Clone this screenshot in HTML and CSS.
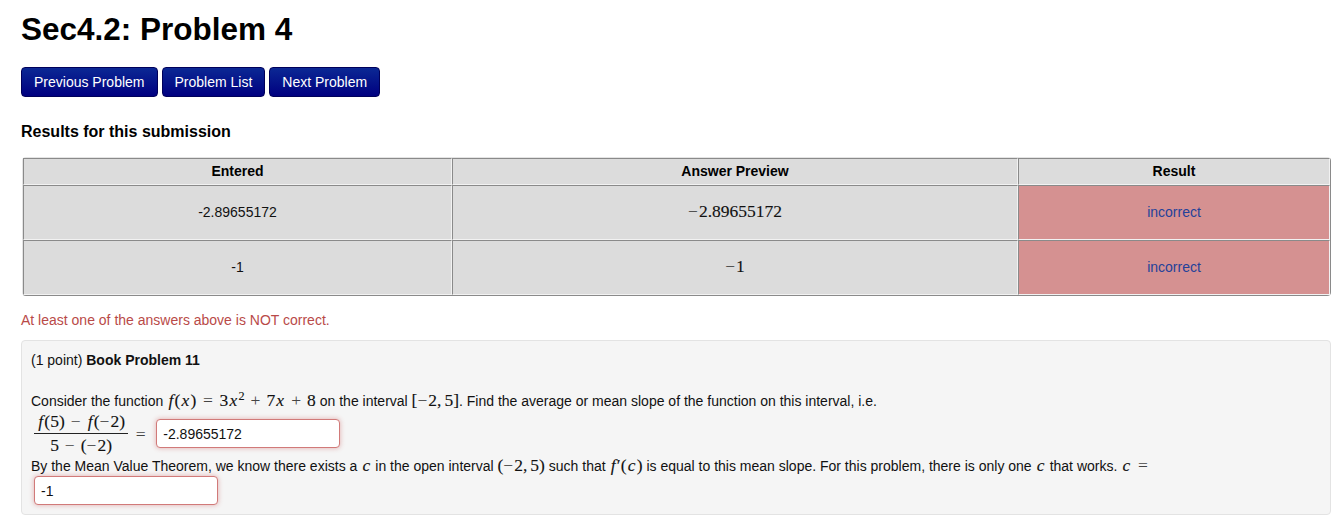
FILE: index.html
```html
<!DOCTYPE html>
<html lang="en">
<head>
<meta charset="utf-8">
<title>Sec4.2: Problem 4</title>
<link rel="stylesheet" href="styles.css">
</head>
<body>
<div class="page">
  <h1 class="title">Sec4.2: Problem 4</h1>
  <div class="nav">
    <a class="btn" href="#">Previous Problem</a>
    <a class="btn" href="#">Problem List</a>
    <a class="btn" href="#">Next Problem</a>
  </div>
  <h2 class="results-title">Results for this submission</h2>
  <table class="results">
    <thead>
      <tr>
        <th class="col-entered">Entered</th>
        <th class="col-preview">Answer Preview</th>
        <th class="col-result">Result</th>
      </tr>
    </thead>
    <tbody>
      <tr>
        <td>-2.89655172</td>
        <td><span class="math"><span class="mo-lead">−</span>2.89655172</span></td>
        <td class="incorrect">incorrect</td>
      </tr>
      <tr>
        <td>-1</td>
        <td><span class="math"><span class="mo-lead">−</span>1</span></td>
        <td class="incorrect">incorrect</td>
      </tr>
    </tbody>
  </table>
  <p class="error">At least one of the answers above is NOT correct.</p>
  <div class="well">
    <div class="problem-head">(1 point) <b>Book Problem 11</b></div>
    <div class="problem-body">
      Consider the function <span class="math"><i class="mi">f</i>(<i class="mi">x</i>)<span class="rel">=</span>3<i class="mi">x</i><sup>2</sup><span class="bin">+</span>7<i class="mi">x</i><span class="bin">+</span>8</span> on the interval <span class="math">[<span class="mo-lead">−</span>2,<span class="thin"></span>5]</span>. Find the average or mean slope of the function on this interval, i.e.<br>
      <span class="math frac-wrap"><span class="frac"><span class="num"><i class="mi">f</i>(5)<span class="bin">−</span><i class="mi">f</i>(<span class="mo-lead">−</span>2)</span><span class="den">5<span class="bin">−</span>(<span class="mo-lead">−</span>2)</span></span><span class="rel">=</span></span><input class="answer" type="text" value="-2.89655172"><br>
      By the Mean Value Theorem, we know there exists a <span class="math"><i class="mi">c</i></span> in the open interval <span class="math">(<span class="mo-lead">−</span>2,<span class="thin"></span>5)</span> such that <span class="math"><i class="mi">f</i>′(<i class="mi">c</i>)</span> is equal to this mean slope. For this problem, there is only one <span class="math"><i class="mi">c</i></span> that works. <span class="math"><i class="mi">c</i><span class="rel">=</span></span><br>
      <input class="answer answer-last" type="text" value="-1">
    </div>
  </div>
</div>
</body>
</html>
```

FILE: styles.css
```css
body {
  margin: 0;
  font-family: Arial, "Liberation Sans", sans-serif;
  font-size: 14px;
  line-height: 20px;
  color: #111;
  background: #fff;
}

.page {
  padding: 0 10px 0 21px;
}

.title {
  margin: 11px 0 0;
  font-size: 31.5px;
  line-height: 36px;
  font-weight: bold;
  color: #000;
}

.nav {
  display: flex;
  gap: 4px;
  margin-top: 20px;
}

.btn {
  display: inline-block;
  height: 30px;
  box-sizing: border-box;
  padding: 4px 12px;
  border: 1px solid #00005a;
  border-radius: 4px;
  background: linear-gradient(#0b2894, #000080);
  color: #fff;
  font-size: 14px;
  line-height: 20px;
  text-decoration: none;
}

.results-title {
  margin: 25px 0 0;
  font-size: 16px;
  line-height: 20px;
  font-weight: bold;
  color: #000;
}

.results {
  margin: 15px 0 0 1px;
  width: 1309px;
  table-layout: fixed;
  border-collapse: separate;
  border-spacing: 0;
  border: 1px solid;
  border-color: #e4e4e4 #8a8a8a #8a8a8a #e4e4e4;
  border-radius: 4px;
  background: #fff;
}

.results th,
.results td {
  box-sizing: border-box;
  border: 1px solid;
  border-color: #8a8a8a #f2f2f2 #f2f2f2 #8a8a8a;
  background: #dcdcdc;
  text-align: center;
  vertical-align: middle;
  font-size: 14px;
  line-height: 20px;
}

.results th {
  padding: 2px 4px 3px;
  font-weight: bold;
  color: #000;
}

.results td {
  padding: 16px 4px 17px;
  color: #111;
}

.col-entered { width: 429px; }
.col-preview { width: 566px; }
.col-result { width: 312px; }

.results td.incorrect {
  background: #d59191;
  color: #24419a;
}

.error {
  margin: 14px 0 0;
  color: #b94a48;
}

.well {
  margin-top: 10px;
  padding: 9px 9px 9px;
  border: 1px solid #e3e3e3;
  border-radius: 4px;
  background: #f5f5f5;
}

.problem-head {
  margin-bottom: 21px;
}

.math {
  font-family: "Liberation Serif", "Times New Roman", serif;
  font-size: 17.5px;
  line-height: 18px;
  color: #111;
  -webkit-text-stroke: 0.12px #111;
}

.mi {
  font-style: italic;
  padding: 0 0.07em;
}

.math sup {
  font-size: 0.7em;
  line-height: 0;
  vertical-align: 0.5em;
}

.rel {
  margin: 0 0.38em;
  color: #444;
  -webkit-text-stroke: 0;
}

.bin {
  margin: 0 0.34em;
  color: #444;
  -webkit-text-stroke: 0;
}

.mo-lead {
  margin-right: 0.06em;
  color: #333;
  -webkit-text-stroke: 0;
}

.thin {
  display: inline-block;
  width: 0.17em;
}

.frac-wrap {
  display: inline-flex;
  align-items: center;
  vertical-align: middle;
  margin: 1px 0 1px 2px;
}

.frac {
  display: inline-flex;
  flex-direction: column;
  align-items: center;
  padding: 0 1px;
}

.num {
  padding: 0 3px 3px;
  border-bottom: 1px solid #222;
  line-height: 18px;
}

.den {
  padding: 2px 3px 1px;
  line-height: 18px;
}

.answer {
  box-sizing: border-box;
  width: 184px;
  height: 29px;
  margin: 0 0 0 4px;
  padding: 4px 6px;
  border: 1px solid #d17a79;
  border-radius: 4px;
  background: #fff;
  box-shadow: 0 0 5px rgba(200, 80, 80, 0.45);
  font-family: Arial, "Liberation Sans", sans-serif;
  font-size: 14px;
  color: #111;
  vertical-align: middle;
}

.answer-last {
  margin-left: 3px;
}
```
